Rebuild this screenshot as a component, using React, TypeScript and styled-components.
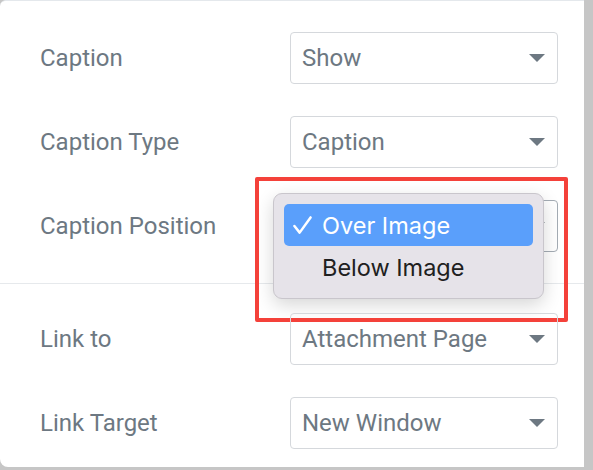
import React from "react";
import styled, { createGlobalStyle } from "styled-components";

const GlobalStyle = createGlobalStyle`
  html, body {
    margin: 0;
    padding: 0;
    background: #c6c6c6;
  }
  body {
    font-family: Roboto, "Liberation Sans", Arial, sans-serif;
  }
`;

type Field = { label: string; value: string; open?: boolean };

const captionFields: Field[] = [
  { label: "Caption", value: "Show" },
  { label: "Caption Type", value: "Caption" },
  { label: "Caption Position", value: "Over Image", open: true },
];

const linkFields: Field[] = [
  { label: "Link to", value: "Attachment Page" },
  { label: "Link Target", value: "New Window" },
];

const menuOptions = ["Over Image", "Below Image"];

const App: React.FC = () => {
  return (
    <>
      <GlobalStyle />
      <Panel>
        <Section $first>
          {captionFields.map((f) => (
            <FieldRow key={f.label} field={f} />
          ))}
        </Section>
        <Section>
          {linkFields.map((f) => (
            <FieldRow key={f.label} field={f} />
          ))}
        </Section>
      </Panel>
    </>
  );
};

const FieldRow: React.FC<{ field: Field }> = ({ field }) => (
  <Row>
    <Label>{field.label}</Label>
    <SelectWrap>
      <SelectBox $focused={field.open}>
        <Value $hidden={field.open}>{field.value}</Value>
        <Caret />
      </SelectBox>
      {field.open && (
        <>
          <Menu>
            {menuOptions.map((opt) => (
              <MenuItem key={opt} $active={opt === field.value}>
                {opt === field.value && (
                  <Check viewBox="0 0 20 20">
                    <path d="M1.5 10.5 L7 17.5 L18.5 1.5" />
                  </Check>
                )}
                {opt}
              </MenuItem>
            ))}
          </Menu>
          <Highlight />
        </>
      )}
    </SelectWrap>
  </Row>
);

export default App;

const Panel = styled.div`
  width: 584px;
  height: 467px;
  box-sizing: border-box;
  background: #ffffff;
  border-top: 1px solid #e4e8ec;
  border-radius: 6px 0 0 8px;
`;

const Section = styled.div<{ $first?: boolean }>`
  display: flex;
  flex-direction: column;
  gap: 32px;
  padding: ${(p) => (p.$first ? "31px 26px 31px 40px" : "29px 26px 0 40px")};
  border-bottom: ${(p) => (p.$first ? "1px solid #e6e9ec" : "none")};
`;

const Row = styled.div`
  display: grid;
  grid-template-columns: 250px 268px;
  align-items: center;
`;

const Label = styled.div`
  font-size: 24px;
  color: #6d7882;
`;

const SelectWrap = styled.div`
  position: relative;
`;

const SelectBox = styled.div<{ $focused?: boolean }>`
  height: 52px;
  box-sizing: border-box;
  display: flex;
  align-items: center;
  justify-content: space-between;
  padding: 0 12px 0 11px;
  border: 1px solid ${(p) => (p.$focused ? "#a4acb4" : "#d5d8dc")};
  border-radius: 4px;
  font-size: 24px;
  color: #6d7882;
`;

const Value = styled.span<{ $hidden?: boolean }>`
  visibility: ${(p) => (p.$hidden ? "hidden" : "visible")};
`;

const Caret = styled.span`
  width: 0;
  height: 0;
  border-left: 8px solid transparent;
  border-right: 8px solid transparent;
  border-top: 8px solid #6d7882;
`;

const Menu = styled.div`
  position: absolute;
  left: -17px;
  top: -7px;
  width: 271px;
  box-sizing: border-box;
  padding: 10px;
  background: #e6e3e9;
  border: 1px solid #c9c6cc;
  border-radius: 9px;
  box-shadow: 0 6px 18px rgba(0, 0, 0, 0.16);
  font-family: Inter, "Liberation Sans", sans-serif;
  font-size: 23.5px;
`;

const MenuItem = styled.div<{ $active?: boolean }>`
  position: relative;
  height: 42px;
  display: flex;
  align-items: center;
  padding-left: 38px;
  border-radius: 5px;
  background: ${(p) => (p.$active ? "#5a9ffb" : "transparent")};
  color: ${(p) => (p.$active ? "#ffffff" : "#202020")};
`;

const Check = styled.svg`
  position: absolute;
  left: 9px;
  top: 12px;
  width: 19px;
  height: 19px;
  fill: none;
  stroke: #ffffff;
  stroke-width: 2.6;
  stroke-linecap: round;
  stroke-linejoin: round;
`;

const Highlight = styled.div`
  position: absolute;
  left: -35px;
  top: -23px;
  width: 313px;
  height: 145px;
  box-sizing: border-box;
  border: 4px solid #f4413a;
  border-radius: 2px;
  pointer-events: none;
`;
